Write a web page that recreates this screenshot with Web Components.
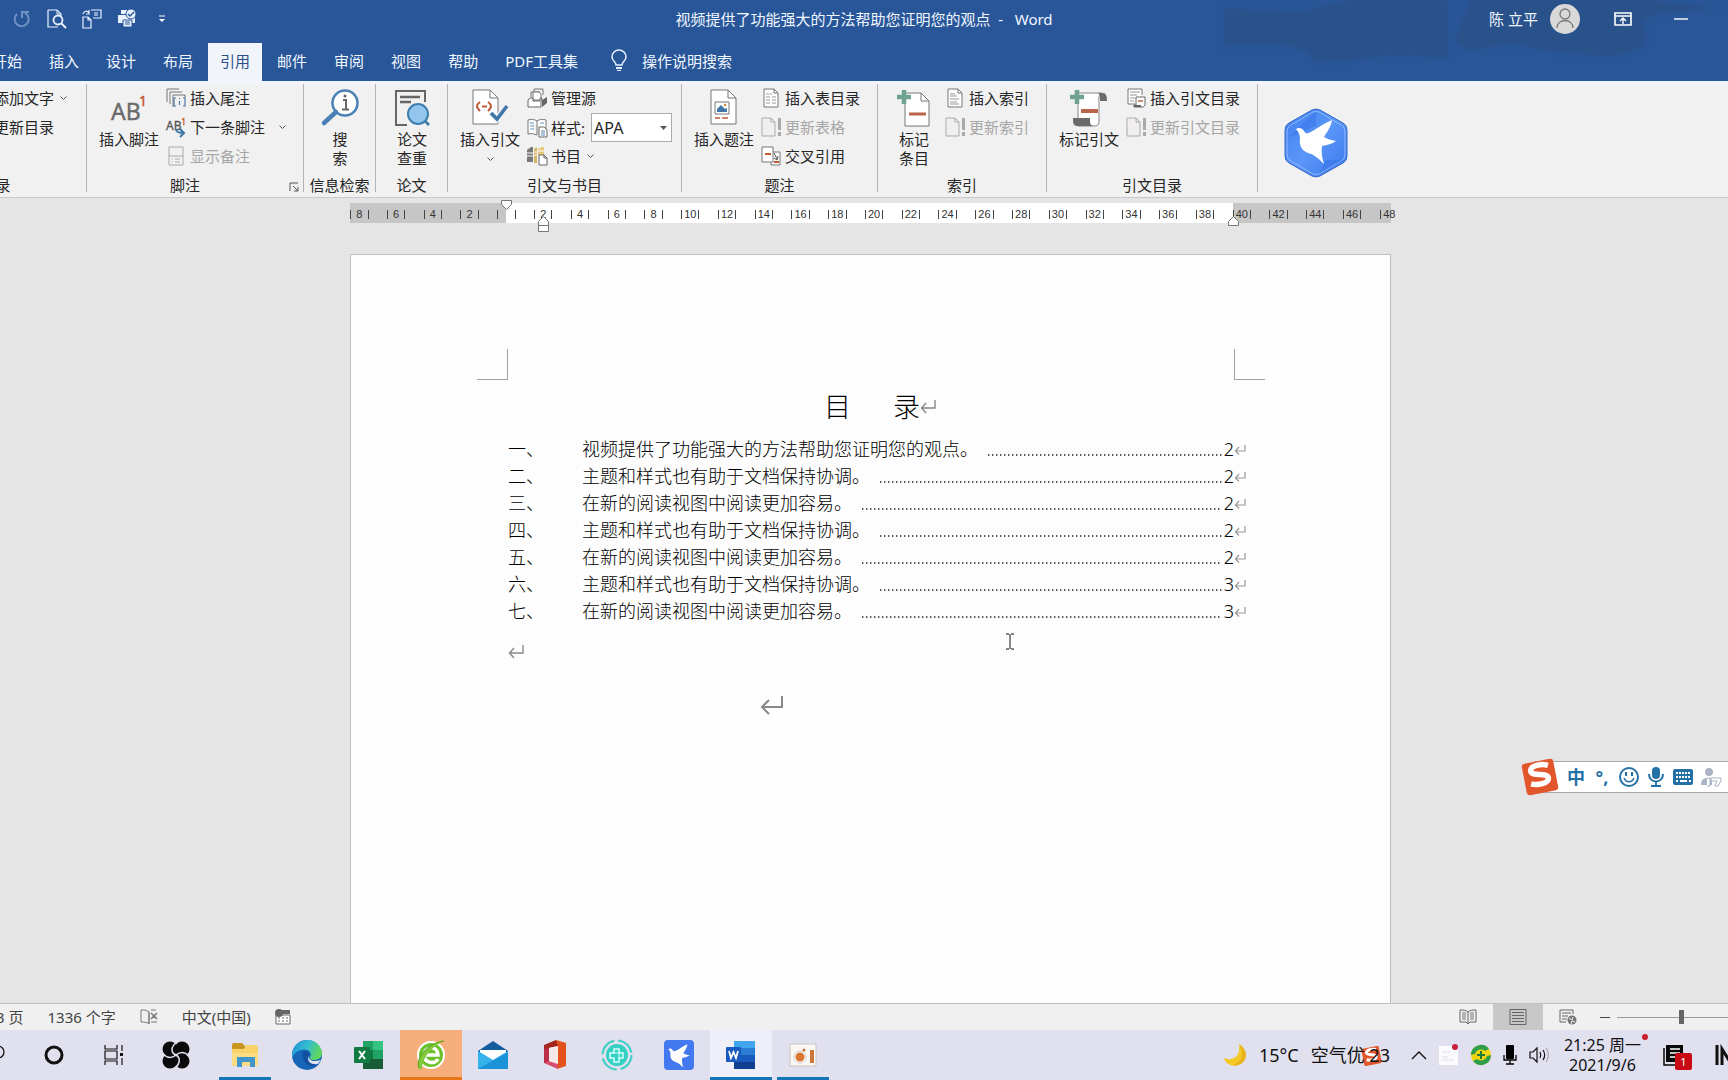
<!DOCTYPE html>
<html lang="zh-CN">
<head>
<meta charset="UTF-8">
<meta name="viewport" content="width=device-width, initial-scale=1">
<title>视频提供了功能强大的方法帮助您证明您的观点 - Word</title>
<style>
  html, body { height: 100%; }
  body {
    margin: 0;
    overflow: hidden;
    font: 15px/20px "Noto Sans", "Noto Sans CJK SC", sans-serif;
    color: #262626;
    background: #e5e5e5;
  }
</style>
</head>
<body>
<word-app></word-app>

<script>
const page = (w, h, f, extra = '') => `<path d="M1 1h${w - f - 2}l${f} ${f}v${h - f - 2}H1z" fill="#fff" stroke="#777"/><path d="M${w - f - 1} 1v${f}h${f}" fill="none" stroke="#777"/>${extra}`;
const bird = '<path d="M14 15c3-2 6-1 8 2 1 2 3 3 4 2 5-1 9-6 24-13-1 7-5 12-8 17 3 2 7 3 12 4-4 3-9 4-14 5-1 6 0 12 2 18-5-5-9-9-16-11-7-3-9-8-8-15 0-3-1-5-4-9z" fill="#fff"/>';
const staleDoc = '<path d="M1 1h9l4 4v14H1z" fill="#f0eeee" stroke="#aaa"/><path d="M10 1v4h4" fill="none" stroke="#aaa"/><path d="M17 1h3v12h-3zM17 15h3v4h-3z" fill="#aaa"/>';

const ICONS = {
  redo: [20, 20, '<path d="M5 5a7 7 0 1 0 8-1" fill="none" stroke="#6f90c2" stroke-width="2"/><path d="M10 9V3h7" fill="none" stroke="#6f90c2" stroke-width="2"/>'],
  preview: [20, 20, '<path d="M1 1h9l4 4v3M1 1v17h10" fill="none" stroke="#e8f2ff" stroke-width="1.2"/><path d="M10 1v4h4" fill="none" stroke="#e8f2ff"/><circle cx="11" cy="11" r="4.5" fill="none" stroke="#e8f2ff" stroke-width="1.8"/><path d="M14 14l5 5" stroke="#e8f2ff" stroke-width="2"/>'],
  convert: [20, 20, '<path d="M1 8h5l3 3v8H1zM6 8v3h3M9 1h10v8h-8M12 4h4M12 6h4" fill="none" stroke="#e8f2ff" stroke-width="1.2"/><path d="M1 5c1-3 4-4 6-1m0-3v4H4" fill="none" stroke="#e8f2ff" stroke-width="1.2"/>'],
  printer: [20, 20, '<path d="M4 1h6v4H4zM1 6h17v8H1z" fill="#e8f2ff"/><path d="M6 11h9v7H6z" fill="#e8f2ff" stroke="#295698"/><path d="M8 13h5M8 15h5" stroke="#295698"/><circle cx="14" cy="5" r="5" fill="#e8f2ff" stroke="#295698"/><path d="M11 5l2 2 4-4" fill="none" stroke="#295698" stroke-width="1.5"/>'],
  qatmore: [8, 8, '<path d="M1 1h6" stroke="#fff"/><path d="M1 4h6L4 7z" fill="#fff"/>'],
  user: [30, 30, '<circle cx="15" cy="15" r="15" fill="#d9d9d9"/><circle cx="15" cy="10" r="5" fill="none" stroke="#777" stroke-width="1.3"/><path d="M7 24c0-10 16-10 16 0" fill="none" stroke="#777" stroke-width="1.3"/>'],
  ribbonopt: [18, 14, '<path d="M1 1h16v12H1zM1 4h16" fill="none" stroke="#fff" stroke-width="1.6"/><path d="M9 12V6M6 9l3-3 3 3" fill="none" stroke="#fff" stroke-width="1.4"/>'],
  minimize: [14, 2, '<path d="M0 1h14" stroke="#fff" stroke-width="1.4"/>'],
  bulb: [16, 22, '<path d="M5 15c0-3-4-4-4-8a7 7 0 0 1 14 0c0 4-4 5-4 8z" fill="none" stroke="#e8f2ff" stroke-width="1.5"/><path d="M5 17h6v2H5zM6 20h4v1H6z" fill="#e8f2ff"/>'],
  chevron: [7, 4, '<path d="M.5 .5l3 3 3-3" fill="none" stroke="#555"/>'],
  launcher: [10, 10, '<path d="M1 9V1h8M4 4l5 5M9 5v4H5" fill="none" stroke="#555"/>'],

  footnote: [36, 37, '<text x="0" y="31" font-family="Noto Sans" font-size="23" fill="#6b6b6b" stroke="#6b6b6b" stroke-width=".4">AB</text><text x="28" y="17" font-family="Noto Sans" font-size="14" fill="#c9512f" stroke="#c9512f" stroke-width=".4">1</text>'],
  endnote: [20, 20, '<path d="M1 14V1h12M4 16V4h12M7 19V7h12v3" fill="none" stroke="#777"/><path d="M8 10h12v9H8z" fill="#f1f1f1"/><path d="M10 10H8v8h2M17 10h2v8h-2M13.500 13v4" fill="none" stroke="#4a78a8" stroke-width="1.2"/><path d="M13 10h1v1h-1z" fill="#4a78a8"/>'],
  nextnote: [20, 20, '<text x="0" y="13" font-family="Noto Sans" font-size="12" fill="#555" stroke="#555" stroke-width=".3">AB</text><text x="15" y="8" font-family="Noto Sans" font-size="9" fill="#c9512f" stroke="#c9512f" stroke-width=".3">1</text><path d="M10 12c0 3 2 4 8 4M14 12l4 4-4 4" fill="none" stroke="#3f76a8" stroke-width="2"/>'],
  shownotes: [20, 20, '<path d="M3 1h14v18H3zM3 10h14" fill="none" stroke="#aaa"/><path d="M6 13h1M9 13h5M6 16h1M9 16h5" stroke="#aaa"/>'],
  search: [38, 37, '<circle cx="24" cy="14" r="12.500" fill="#fff" stroke="#4a80b5" stroke-width="2.500"/><path d="M15 23L3 34" stroke="#4a80b5" stroke-width="4.500" stroke-linecap="round"/><path d="M22 11h3v9M21 20.500h7" fill="none" stroke="#666" stroke-width="2"/><circle cx="24" cy="7" r="1.500" fill="#666"/>'],
  paper: [36, 37, '<path d="M13 36H2V2h29v11" fill="none" stroke="#666" stroke-width="2"/><path d="M6 8h20M6 13h11" stroke="#666" stroke-width="2.500"/><circle cx="24" cy="25" r="10" fill="#93c6ee" stroke="#3f7fae" stroke-width="2"/><path d="M31 32l4 4" stroke="#3f7fae" stroke-width="3"/>'],
  citation: [36, 37, page(27, 36, 8, '<path d="M8 13c-4 3-4 5 0 9M16 13c4 3 4 5 0 9M10 17.500h5" fill="none" stroke="#c0593a" stroke-width="2"/><path d="M19 24l6 6L35 17" fill="none" stroke="#f1f1f1" stroke-width="6"/><path d="M19 24l6 6L35 17" fill="none" stroke="#3f76a8" stroke-width="3.500"/>')],
  sources: [20, 20, '<path d="M4 9V4h9M7 5V1h9v6" fill="none" stroke="#777"/><path d="M6 4h6l2 2v6H6z" fill="#fff" stroke="#777"/><path d="M1 19v-7l2-2h3v3h7v-3h2l-1 3v6z" fill="#fff" stroke="#666"/><path d="M15 12l5-3v6l-5 4z" fill="#666"/>'],
  style: [20, 20, '<path d="M1 2c3-1 6-1 9 1 3-2 6-2 9-1v9M10 3v14M1 2v14c3-1 6 0 9 1" fill="#fff" stroke="#777"/><path d="M3 5h4M3 8h4M3 11h4M13 5h4" stroke="#6a9bc8"/><path d="M12 9h5l3 3v7h-8z" fill="#fff" stroke="#666"/><path d="M14 13h4M14 15h4M14 17h4" stroke="#5a88b0"/>'],
  biblio: [20, 20, '<path d="M0 4l4-3h2v15H0z" fill="#777"/><path d="M7 3l3-2v16H7z" fill="#d6b562"/><path d="M11 3l4-2h2v8h-6z" fill="#e4c97d"/><path d="M0 7h6M0 10h6M7 6h3M7 9h3M11 5h6" stroke="#fff"/><path d="M12 9h5l3 3v7h-8z" fill="#fff" stroke="#666"/><path d="M17 9v3h3" fill="none" stroke="#666"/>'],
  caption: [28, 37, page(27, 36, 8, '<path d="M5 13h14v12H5z" fill="#fff" stroke="#777"/><path d="M7 23v-3l4-4 4 4 2-1v4z" fill="#3f76a8"/><circle cx="15" cy="16" r="1.300" fill="#c98f3a"/><path d="M5 29h5M12 29h6" stroke="#c0593a" stroke-width="1.500"/>')],
  list: [20, 20, '<path d="M3 1h10l4 4v14H3z" fill="#fff" stroke="#777"/><path d="M13 1v4h4" fill="none" stroke="#777"/><path d="M5 6h3M9 6h2M5 9h4M11 9h4M5 12h4M11 12h4M5 15h4M11 15h4" stroke="#999"/>'],
  stale: [20, 20, staleDoc],
  crossref: [20, 20, '<path d="M1 1h11v15H1zM12 6h7v13h-9v-3" fill="#fff" stroke="#777"/><path d="M4 8h6" stroke="#c0593a" stroke-width="2"/><path d="M13 16h5" stroke="#c0593a" stroke-width="2"/><path d="M13 7l3 6m-3-1l3 2 1-4" fill="none" stroke="#555"/>'],
  markentry: [34, 38, '<path d="M8 4h16l8 8v25H8z" fill="#fff" stroke="#777"/><path d="M24 4v8h8" fill="none" stroke="#777"/><path d="M12 25h17" stroke="#b9644a" stroke-width="3"/><path d="M7 1v14M0 8h14" stroke="#6fa38f" stroke-width="4.500"/>'],
  index: [20, 20, '<path d="M3 1h10l4 4v14H3z" fill="#fff" stroke="#777"/><path d="M13 1v4h4" fill="none" stroke="#777"/><path d="M5 6h5M5 8h7M5 11h9M5 14h7M5 16h9" stroke="#999"/>'],
  markcite: [38, 38, '<path d="M8 4h24c-3 2-4 5-3 9v20c0 3-2 4-5 4H8z" fill="#fff" stroke="#888"/><path d="M28 4h5c3 0 4 3 4 8h-7c0-5 0-6-2-8zM3 29h17c0 5 0 7 3 8H7c-4 0-4-4-4-8z" fill="#6b6b6b"/><path d="M11 22h17" stroke="#b9644a" stroke-width="4"/><path d="M7 1v14M0 8h14" stroke="#6fa38f" stroke-width="4.500"/>'],
  citetable: [20, 20, '<path d="M9 16H2V1h14v6" fill="#fff" stroke="#777"/><path d="M4 4h10M4 7h7M4 10h5M4 13h4" stroke="#999"/><path d="M10 9h9v7c0 2-1 3-3 3H8v-2h2z" fill="#fff" stroke="#666"/><path d="M12 13h5" stroke="#b9644a" stroke-width="1.500"/><path d="M8 17h7v2H8z" fill="#666"/>'],
  birdhex: [64, 70, '<defs><linearGradient id="h" x1="0" y1="0" x2="1" y2="1"><stop offset="0" stop-color="#3f7ff0"/><stop offset=".5" stop-color="#5a96f8"/><stop offset="1" stop-color="#3b78ec"/></linearGradient></defs><path d="M28 2q4-2 8 0l23 13q4 2 4 7v26q0 5-4 7L36 68q-4 2-8 0L5 55q-4-2-4-7V22q0-5 4-7z" fill="url(#h)" stroke="#3468c8"/><path d="M29 4q3-1 6 0l22 13q4 2 4 6v24q0 4-4 6L35 66q-3 1-6 0L7 53q-4-2-4-6V23q0-4 4-6z" fill="none" stroke="#8fb9ff"/><path d="M32 3v15L4 30zM42 52l17 0-24 14z" fill="#2f6be2" opacity=".35"/><g transform="translate(-2 6)">' + bird + '</g>'],

  retS: [12, 10, '<path d="M11 0v6H2M5 2L1.500 6 5 9.500" fill="none" stroke="#999" stroke-width="1.200"/>'],
  retM: [16, 14, '<path d="M15 0v8H2M6 3L1.500 8 6 13" fill="none" stroke="#888" stroke-width="1.400"/>'],
  retL: [24, 20, '<path d="M22 1v11H3M9 5l-7 7 7 7" fill="none" stroke="#888" stroke-width="2"/>'],
  ibeam: [8, 18, '<path d="M0 1h3M5 1h3M0 16h3M5 16h3M4 1v15" fill="none" stroke="#111"/>'],

  sogou: [38, 38, '<g transform="rotate(-11 19 19)"><rect x="3" y="3" width="32" height="32" rx="3" fill="#e2562c"/><path d="M29 9c-6-3-17-3-18 2-1 7 17 4 16 11-1 5-12 5-18 2" fill="none" stroke="#fff" stroke-width="5.500"/></g>'],
  smile: [20, 20, '<circle cx="10" cy="10" r="9" fill="none" stroke="#2471a8" stroke-width="2"/><path d="M7 5v4M13 5v4" stroke="#2471a8" stroke-width="2"/><path d="M5 11c2 5 8 5 10 0" fill="none" stroke="#2471a8" stroke-width="1.600"/>'],
  imemic: [18, 20, '<rect x="5" y="0" width="8" height="12" rx="4" fill="#2471a8"/><path d="M2 7c0 10 14 10 14 0M9 14v5M4 19h10" fill="none" stroke="#2471a8" stroke-width="2"/>'],
  keyboard: [20, 16, '<rect width="20" height="16" rx="2" fill="#2471a8"/><path d="M3 4h14M3 8h14" stroke="#fff" stroke-width="2" stroke-dasharray="2 1"/><path d="M3 12h2M7 12h7M16 12h2" stroke="#fff" stroke-width="2"/>'],
  person: [20, 20, '<circle cx="8" cy="5" r="4" fill="#aab4c4"/><path d="M0 18c0-6 3-7 7-7h4v7z" fill="#aab4c4"/><path d="M6 11h3v8H6M10 11h10v3l-3 5h-3l2-5h-6z" fill="#fff" stroke="#aab4c4"/>'],
  spell: [18, 16, '<path d="M9 3C7 1 4 1 1 1v12c3 0 6 0 8 2zM9 3v12M11 1h5" fill="none" stroke="#777"/><path d="M11 4l6 6m0-6l-6 6" stroke="#777" stroke-width="1.500"/><path d="M11 13h6" stroke="#777"/>'],
  macro: [16, 16, '<path d="M1 6h14v9H1z" fill="#fff" stroke="#666"/><path d="M7 1h8v4H7z" fill="#666"/><circle cx="4" cy="4" r="4" fill="#666"/><path d="M3 9h11M3 12h11" stroke="#666" stroke-dasharray="2 2"/>'],
  read: [18, 16, '<path d="M9 3C7 1 4 1 1 1v12h6l2 2 2-2h6V1c-3 0-6 0-8 2zM9 3v12" fill="none" stroke="#666"/><path d="M3 4h4M3 6h4M3 8h4M3 10h4M11 4h4M11 6h4M11 8h4M11 10h4" stroke="#777"/>'],
  print: [18, 16, '<path d="M1 .5h16v15H1z" fill="none" stroke="#666"/><path d="M3 3.500h12M3 6.500h12M3 9.500h12M3 12.500h12" stroke="#666"/>'],
  web: [18, 16, '<path d="M7 13H1V1h13v4M3 4h9M3 7h6M3 10h5" fill="none" stroke="#666"/><circle cx="13" cy="11" r="4.500" fill="#777"/><path d="M10 9l3 2 1-3M12 15l1-3 3 1" fill="none" stroke="#f0f0f0"/>'],

  find: [24, 24, '<circle cx="20" cy="9" r="6" fill="none" stroke="#111" stroke-width="1.300"/><path d="M15 13l-7 8" stroke="#111" stroke-width="1.300"/>'],
  cortana: [24, 24, '<circle cx="14" cy="12" r="8" fill="none" stroke="#111" stroke-width="3"/>'],
  taskview: [24, 24, '<path d="M3 2v4h12V2M3 22v-4h12v4M3 8h12v8H3zM20 2v6M20 15v7" fill="none" stroke="#111" stroke-width="1.200"/><path d="M18 10h3v3h-3z" fill="#111"/>'],
  flower: [28, 28, '<g fill="#0a0a0a"><circle cx="8" cy="8" r="7.500"/><circle cx="20" cy="8" r="7.500"/><circle cx="8" cy="20" r="7.500"/><circle cx="20" cy="20" r="7.500"/></g><path d="M14 14C9 12 8 6 15 1M14 14c5-4 9-3 13 1M14 14c5 3 4 9-1 13M14 14c-5 4-9 3-13-1" fill="none" stroke="#e0e0ee" stroke-width="1.500"/>'],
  folder: [28, 28, '<path d="M1 4q0-2 2-2h8l3 3v6H1z" fill="#c8951f"/><path d="M1 8h12l2-4h10q2 0 2 2v19H1z" fill="#f7d36a"/><path d="M1 12h26v13H1z" fill="#fbdc82"/><path d="M6 26V16h18v10h-5v-5h-8v5z" fill="#4396cc"/>'],
  edge: [32, 32, '<defs><linearGradient id="e" x1="0" y1="0" x2="1" y2=".3"><stop offset="0" stop-color="#1f8fd8"/><stop offset=".55" stop-color="#33bdd0"/><stop offset="1" stop-color="#5fd65e"/></linearGradient></defs><circle cx="16" cy="16" r="15" fill="#1765b8"/><path d="M1 15C3-3 29-4 31 14c0 5-4 7-8 7-3 0-5-1-4-3 3-5-3-9-9-7-4 1-8 4-9 8z" fill="url(#e)"/><path d="M12 13c-2 7 3 14 10 14 3 0 5-1 6-2-3 1-9 0-11-4-1-2 0-4 2-5-1-4-5-5-7-3z" fill="#1450a0"/><path d="M18 17c-1 5 5 6 12 4l-3 4c-6 1-12-2-9-8z" fill="#e0e0ee"/>'],
  excel: [30, 28, '<path d="M9 0h11v14H9z" fill="#21a366"/><path d="M19 0h10v9H19z" fill="#33c481"/><path d="M9 9h10v10H9z" fill="#107c41"/><path d="M19 9h10v10H19z" fill="#21a366"/><path d="M9 18h20v10H9z" fill="#185c37"/><rect y="6" width="16" height="16" rx="1" fill="#107c41"/><path d="M5 10l6 8M11 10l-6 8" stroke="#fff" stroke-width="2"/>'],
  browser: [32, 32, '<circle cx="16" cy="16" r="13" fill="#6cc22c" stroke="#fff" stroke-width="2"/><path d="M23 20c-3 6-14 4-14-4 0-9 14-10 14 0H10" fill="none" stroke="#fff" stroke-width="3.500"/><path d="M4 30C0 22 10 4 29 2c-9 4-20 13-22 26 0 2-2 3-3 2z" fill="#7fc93a"/><path d="M4 29C0 20 12 4 29 2" fill="none" stroke="#56a11e"/>'],
  mail: [30, 28, '<path d="M0 10L15 0l15 10v5H0z" fill="#145c9e"/><path d="M2 9h26v12H2z" fill="#fff"/><path d="M0 10l15 9 15-9v18H0z" fill="#35b2ec"/><path d="M0 28l30-17v17z" fill="#1c93d8"/>'],
  office: [24, 30, '<path d="M13 0l10 3v23l-9 3z" fill="#e2521a"/><path d="M13 0L1 5v18l5-2V8l9-2z" fill="#a5251e"/><path d="M1 23l5-2 9 3v5z" fill="#d64b6e"/><path d="M6 8l9-2v18l-9-3z" fill="#f7e9ea"/><path d="M1 9v14l5-2V8z" fill="#bb3048"/>'],
  teal: [32, 32, '<circle cx="16" cy="16" r="14.500" fill="none" stroke="#3fcfc5" stroke-width="2" stroke-dasharray="19 4"/><circle cx="16" cy="16" r="11" fill="#35cfc4"/><path d="M13 10h5v4h4v5h-4v4h-5v-4h-4v-5h4z" fill="none" stroke="#d7fffa" stroke-width="1.500"/><path d="M13 14h5v5" fill="none" stroke="#d7fffa"/>'],
  birdapp: [30, 30, '<rect width="30" height="30" rx="4" fill="#4279ee"/><g transform="translate(-3 1) scale(.53)">' + bird + '</g>'],
  word: [30, 28, '<path d="M8 0h21v7H8z" fill="#41a5ee"/><path d="M8 7h21v7H8z" fill="#2b7cd3"/><path d="M8 14h21v7H8z" fill="#185abd"/><path d="M8 21h21v7H8z" fill="#103f91"/><rect y="6" width="15" height="15" rx="1" fill="#185abd"/><path d="M3 10l2 7 2.500-6L10 17l2-7" fill="none" stroke="#fff" stroke-width="1.800"/>'],
  recorder: [28, 24, '<path d="M1 1h26v22H1z" fill="#faf7f4" stroke="#c9c4c4"/><circle cx="11" cy="14" r="6" fill="#fff" stroke="#ccc"/><circle cx="11" cy="14" r="4.500" fill="#d9772f"/><circle cx="15" cy="7" r="1.500" fill="#c9772f"/><path d="M21 7h4v13h-4z" fill="#c9773a"/>'],

  moon: [24, 24, '<path d="M16 1c8 5 9 14 3 19-6 5-16 3-18-5 10 4 17-3 15-14z" fill="#f4c827"/><path d="M16 1c8 5 9 14 3 19-3 2-6 3-9 2 8-2 12-11 6-21z" fill="#e9b31b"/>'],
  up: [16, 10, '<path d="M1 9l7-7 7 7" fill="none" stroke="#111" stroke-width="1.400"/>'],
  traydoc: [20, 22, '<path d="M0 2h19v19H0z" fill="#fbfbfd"/><path d="M3 8h9M3 13h6M3 16h12" stroke="#dcdce4"/><circle cx="16" cy="3" r="3" fill="#c81e3a"/>'],
  guard: [20, 20, '<circle cx="10" cy="10" r="10" fill="#f2d40f"/><path d="M0 10A10 10 0 0 1 18 4L14 6C10 3 5 5 4 9zM20 10a10 10 0 0 1-18 6l4-2c4 3 9 1 10-3z" fill="#2f9e4a"/><path d="M10 6v8M6 10h8" stroke="#1f7c38" stroke-width="2"/>'],
  mic: [14, 20, '<rect x="3" y="0" width="8" height="14" rx="1" fill="#000"/><path d="M1 10v5h12v-5M7 15v4M3 19h8" fill="none" stroke="#000" stroke-width="1.300"/>'],
  speaker: [22, 16, '<path d="M1 5h3l4-4v14l-4-4H1z" fill="none" stroke="#111" stroke-width="1.200"/><path d="M11 5c1 2 1 4 0 6M14 3c2 3 2 7 0 10" fill="none" stroke="#111" stroke-width="1.200"/><path d="M17 1c3 4 3 10 0 14" fill="none" stroke="#999"/>'],
  notice: [22, 22, '<path d="M3 1h17v17H3z" fill="#0a0a0a"/><path d="M1 4v17h15" fill="none" stroke="#0a0a0a" stroke-width="1.500"/><path d="M7 5h10M7 9h10M7 13h6" stroke="#fff" stroke-width="1.500"/>'],
  pen: [24, 24, '<path d="M2 2v20M7 22V6l10 16" fill="none" stroke="#111" stroke-width="3"/>'],
};

class UiIcon extends HTMLElement {
  connectedCallback() {
    const [w, h, body] = ICONS[this.getAttribute('name')];
    this.attachShadow({ mode: 'open' }).innerHTML = `
      <style>
        :host { display: inline-flex; flex: none; }
        svg { display: block; overflow: visible; }
      </style>
      <svg width="${w}" height="${h}" viewBox="0 0 ${w} ${h}" aria-hidden="true">${body}</svg>
    `;
  }
}

class TitleBar extends HTMLElement {
  connectedCallback() {
    this.attachShadow({ mode: 'open' }).innerHTML = `
      <style>
        :host { display: block; position: relative; background: #295698; color: #f0f7ff; }
        .clouds { position: absolute; top: 0; right: 0; }
        .bar {
          position: relative;
          display: grid;
          grid-template-columns: 1fr auto 1fr;
          align-items: center;
          height: 38px;
        }
        .quick { display: flex; align-items: center; gap: 15px; padding-left: 12px; }
        .quick button:last-child { margin-left: 6px; }
        h1 { margin: 0; font-size: 15px; font-weight: 400; white-space: pre; }
        .right { display: flex; align-items: center; justify-content: flex-end; padding-right: 40px; }
        .user { display: flex; align-items: center; gap: 12px; margin-right: 34px; }
        .opt { margin-right: 42px; }
        button { display: flex; padding: 0; border: 0; background: none; color: inherit; font: inherit; align-items: center; }
      </style>
      <svg class="clouds" width="520" height="72" viewBox="0 0 520 72" aria-hidden="true">
        <filter id="soft"><feGaussianBlur stdDeviation="2"/></filter>
        <g fill="#2b4f84" opacity=".65" filter="url(#soft)">
          <path d="M16 8L90 12l50-12h100v58q-60-6-96 2l-36 2-12-12q-30-10-80-4z"/>
          <path d="M262 0h180l70 8-60 6-20 6 8 16q-8 20-44 20-60-4-90-12l-44 6q-14-4-14-14z"/>
        </g>
      </svg>
      <div class="bar">
        <div class="quick">
          <button aria-label="重复"><ui-icon name="redo"></ui-icon></button>
          <button aria-label="打印预览"><ui-icon name="preview"></ui-icon></button>
          <button aria-label="转换"><ui-icon name="convert"></ui-icon></button>
          <button aria-label="快速打印"><ui-icon name="printer"></ui-icon></button>
          <button aria-label="自定义"><ui-icon name="qatmore"></ui-icon></button>
        </div>
        <h1>视频提供了功能强大的方法帮助您证明您的观点  -   Word</h1>
        <div class="right">
          <button class="user">陈 立平<ui-icon name="user"></ui-icon></button>
          <button class="opt" aria-label="功能区显示选项"><ui-icon name="ribbonopt"></ui-icon></button>
          <button aria-label="最小化"><ui-icon name="minimize"></ui-icon></button>
        </div>
      </div>
      <slot></slot>
    `;
  }
}

class RibbonTabs extends HTMLElement {
  connectedCallback() {
    const tabs = ['开始', '插入', '设计', '布局', '引用', '邮件', '审阅', '视图', '帮助', 'PDF工具集'];
    this.attachShadow({ mode: 'open' }).innerHTML = `
      <style>
        :host { display: block; position: relative; padding-top: 5px; overflow: hidden; }
        nav { display: flex; gap: 3px; margin-left: -20px; }
        button {
          height: 38px;
          padding: 0 12px 2px;
          border: 0;
          background: none;
          color: #f0f7ff;
          font: inherit;
          white-space: nowrap;
        }
        button[aria-selected="true"] { background: #f1f4fa; color: #2b4f84; }
        .tell { display: flex; align-items: center; gap: 15px; margin-left: 6px; }
      </style>
      <nav role="tablist">
        ${tabs.map(t => `<button role="tab" aria-selected="${t === '引用'}">${t}</button>`).join('')}
        <button class="tell"><ui-icon name="bulb"></ui-icon>操作说明搜索</button>
      </nav>
    `;
  }
}

class RibbonGroup extends HTMLElement {
  connectedCallback() {
    const launcher = this.hasAttribute('launcher')
      ? '<button aria-label="脚注和尾注"><ui-icon name="launcher"></ui-icon></button>' : '';
    this.attachShadow({ mode: 'open' }).innerHTML = `
      <style>
        :host {
          display: flex;
          flex: none;
          flex-direction: column;
          gap: 8px;
          box-sizing: border-box;
          border-right: 1px solid #b4b4b4;
        }
        .items { display: flex; gap: 3px; height: 87px; padding: 0 7px 0 8px; }
        .foot { display: flex; line-height: 13px; }
        .label { flex: 1; text-align: center; white-space: nowrap; }
        button {
          display: flex;
          align-items: flex-end;
          justify-content: flex-end;
          width: 16px;
          padding: 0;
          margin-right: 4px;
          border: 0;
          background: none;
        }
      </style>
      <div class="items"><slot></slot></div>
      <div class="foot"><span class="label">${this.getAttribute('label')}</span>${launcher}</div>
    `;
  }
}

class RibbonBig extends HTMLElement {
  connectedCallback() {
    this.attachShadow({ mode: 'open' }).innerHTML = `
      <style>
        :host { display: block; }
        button {
          display: flex;
          flex-direction: column;
          align-items: center;
          min-width: 56px;
          padding: 5px 4px 0;
          border: 0;
          background: none;
          color: inherit;
          font: inherit;
          line-height: 19px;
          text-align: center;
          white-space: pre-line;
        }
        .pic { display: flex; justify-content: center; height: 41px; }
        .more { padding-top: 8px; line-height: 4px; }
      </style>
      <button>
        <span class="pic"><ui-icon name="${this.getAttribute('icon')}"></ui-icon></span>
        <slot></slot>
        ${this.hasAttribute('menu') ? '<ui-icon class="more" name="chevron"></ui-icon>' : ''}
      </button>
    `;
  }
}

class RibbonItem extends HTMLElement {
  connectedCallback() {
    const icon = this.getAttribute('icon');
    const menu = this.getAttribute('menu');
    this.attachShadow({ mode: 'open' }).innerHTML = `
      <style>
        :host { display: block; }
        button {
          display: flex;
          align-items: center;
          height: 29px;
          padding: 0 10px 2px 0;
          border: 0;
          background: none;
          color: inherit;
          font: inherit;
          white-space: nowrap;
        }
        button:disabled { color: #a6a6a6; }
        .icon { margin-right: 4px; }
        .more { margin-left: 6px; }
        .split { margin-left: 14px; }
      </style>
      <button ${this.hasAttribute('disabled') ? 'disabled' : ''}>
        ${icon ? `<ui-icon class="icon" name="${icon}"></ui-icon>` : ''}
        <slot></slot>
        ${menu !== null ? `<ui-icon class="${menu || 'more'}" name="chevron"></ui-icon>` : ''}
      </button>
    `;
  }
}

class CitationStyle extends HTMLElement {
  connectedCallback() {
    this.attachShadow({ mode: 'open' }).innerHTML = `
      <style>
        :host { display: flex; align-items: center; height: 29px; padding-right: 2px; }
        label { width: 36px; margin: 0 4px; white-space: nowrap; }
        .box { display: grid; align-items: center; }
        .box > * { grid-area: 1 / 1; }
        select {
          appearance: none;
          box-sizing: border-box;
          width: 81px;
          height: 29px;
          padding: 0 2px;
          border: 1px solid #ababab;
          border-radius: 0;
          background: #fff;
          color: #262626;
          font: inherit;
          font-size: 16px;
        }
        svg { justify-self: end; margin-right: 5px; pointer-events: none; }
      </style>
      <ui-icon name="style"></ui-icon>
      <label for="style">样式:</label>
      <span class="box">
        <select id="style"><option>APA</option><option>Chicago</option><option>MLA</option></select>
        <svg width="7" height="4" viewBox="0 0 7 4"><path d="M0 0h7L3.500 4z" fill="#555"/></svg>
      </span>
    `;
  }
}

class WordRibbon extends HTMLElement {
  connectedCallback() {
    this.attachShadow({ mode: 'open' }).innerHTML = `
      <style>
        :host {
          display: flex;
          flex: none;
          overflow: hidden;
          padding: 3px 0 5px;
          border-bottom: 1px solid #cacaca;
          background: linear-gradient(#f1f6fd, #f1f1f1 6px);
        }
        .toc { width: 182px; margin-left: -95px; }
        .toc .col { margin-left: auto; padding-right: 2px; }
        .brand { display: flex; align-items: center; padding: 10px 26px 0; }
      </style>
      <ribbon-group class="toc" label="目录">
        <div class="col">
          <ribbon-item menu>添加文字</ribbon-item>
          <ribbon-item>更新目录</ribbon-item>
        </div>
      </ribbon-group>
      <ribbon-group label="脚注" launcher>
        <ribbon-big icon="footnote">插入脚注</ribbon-big>
        <div>
          <ribbon-item icon="endnote">插入尾注</ribbon-item>
          <ribbon-item icon="nextnote" menu="split">下一条脚注</ribbon-item>
          <ribbon-item icon="shownotes" disabled>显示备注</ribbon-item>
        </div>
      </ribbon-group>
      <ribbon-group label="信息检索">
        <ribbon-big icon="search">搜<br>索</ribbon-big>
      </ribbon-group>
      <ribbon-group label="论文">
        <ribbon-big icon="paper">论文<br>查重</ribbon-big>
      </ribbon-group>
      <ribbon-group label="引文与书目">
        <ribbon-big icon="citation" menu>插入引文</ribbon-big>
        <div>
          <ribbon-item icon="sources">管理源</ribbon-item>
          <citation-style></citation-style>
          <ribbon-item icon="biblio" menu>书目</ribbon-item>
        </div>
      </ribbon-group>
      <ribbon-group label="题注">
        <ribbon-big icon="caption">插入题注</ribbon-big>
        <div>
          <ribbon-item icon="list">插入表目录</ribbon-item>
          <ribbon-item icon="stale" disabled>更新表格</ribbon-item>
          <ribbon-item icon="crossref">交叉引用</ribbon-item>
        </div>
      </ribbon-group>
      <ribbon-group label="索引">
        <ribbon-big icon="markentry">标记<br>条目</ribbon-big>
        <div>
          <ribbon-item icon="index">插入索引</ribbon-item>
          <ribbon-item icon="stale" disabled>更新索引</ribbon-item>
        </div>
      </ribbon-group>
      <ribbon-group label="引文目录">
        <ribbon-big icon="markcite">标记引文</ribbon-big>
        <div>
          <ribbon-item icon="citetable">插入引文目录</ribbon-item>
          <ribbon-item icon="stale" disabled>更新引文目录</ribbon-item>
        </div>
      </ribbon-group>
      <div class="brand"><ui-icon name="birdhex"></ui-icon></div>
    `;
  }
}

class WordRuler extends HTMLElement {
  connectedCallback() {
    let cells = '';
    for (let n = -8; n <= 48; n += 2) {
      cells += `<span class="cell"><span class="tick">${n ? Math.abs(n) : ''}</span></span>`;
    }
    this.attachShadow({ mode: 'open' }).innerHTML = `
      <style>
        :host {
          display: block;
          position: relative;
          height: 20px;
          background: linear-gradient(90deg, #c6c6c6 156px, #fff 156px, #fff 883px, #c6c6c6 883px);
        }
        .scale {
          display: flex;
          align-items: center;
          height: 22px;
          margin: 0 -16px 0 -9px;
          font: 11px/9px "Liberation Sans", Arial, sans-serif;
          color: #333;
        }
        .cell { display: flex; flex: 1; justify-content: center; }
        .tick { width: 50%; height: 9px; border: solid #444; border-width: 0 1px; text-align: center; box-sizing: border-box; }
        .cell:last-child .tick { border-right: 0; }
        svg { position: absolute; }
        .first { left: 151px; top: -3px; }
        .hang { left: 188px; top: 13px; }
        .right { left: 878px; top: 13px; }
      </style>
      <div class="scale">${cells}</div>
      <svg class="first" width="11" height="10"><path d="M.5 .5h10v4l-5 5-5-5z" fill="#fff" stroke="#777"/></svg>
      <svg class="hang" width="11" height="16"><path d="M.5 5.500l5-5 5 5v10H.5zM.5 9.500h10" fill="#fff" stroke="#777"/></svg>
      <svg class="right" width="11" height="10"><path d="M.5 5.500l5-5 5 5v4H.5z" fill="#fff" stroke="#777"/></svg>
    `;
  }
}

class TocRow extends HTMLElement {
  connectedCallback() {
    this.attachShadow({ mode: 'open' }).innerHTML = `
      <style>
        :host { display: flex; align-items: center; height: 27px; }
        .num { flex: none; width: 74px; }
        .leader {
          flex: 1;
          height: 2px;
          margin: 11px 2px 0 10px;
          background: repeating-linear-gradient(90deg, #555 0 1px, #bbb 1px 2px, transparent 2px 4px);
        }
        ui-icon { margin-right: -12px; }
      </style>
      <span class="num">${this.getAttribute('num')}、</span>
      <slot></slot>
      <span class="leader"></span>
      <span>${this.getAttribute('page')}</span>
      <ui-icon name="retS"></ui-icon>
    `;
  }
}

class DocPage extends HTMLElement {
  connectedCallback() {
    this.attachShadow({ mode: 'open' }).innerHTML = `
      <style>
        :host {
          display: block;
          position: relative;
          flex: 1;
          box-sizing: border-box;
          padding: 94px 125px 0 126px;
          border: 1px solid #c0c0c0;
          border-bottom: 0;
          background: #fdfdfd;
          color: #000;
        }
        .corners { display: flex; justify-content: space-between; }
        .corners span { width: 31px; height: 31px; border: solid #a0a0a0; border-width: 0 1px 1px 0; box-sizing: border-box; }
        .corners span + span { border-width: 0 0 1px 1px; }
        .body { padding: 8px 31px 0; font-size: 18px; font-weight: 300; line-height: 27px; }
        h2 {
          display: flex;
          align-items: center;
          justify-content: center;
          margin: 0 0 10px;
          font-size: 27px;
          font-weight: 300;
          line-height: 38px;
          white-space: pre;
        }
        h2 ui-icon { margin-right: -18px; }
        p { margin: 0; }
        .end { padding-top: 14px; height: 70px; box-sizing: border-box; }
        .next { padding-left: 252px; }
        .cursor { position: absolute; left: 655px; top: 378px; }
      </style>
      <div class="corners"><span></span><span></span></div>
      <div class="body">
        <h2>目      录<ui-icon name="retM"></ui-icon></h2>
        <slot></slot>
        <p class="end"><ui-icon name="retM"></ui-icon></p>
        <p class="next"><ui-icon name="retL"></ui-icon></p>
      </div>
      <ui-icon class="cursor" name="ibeam"></ui-icon>
    `;
  }
}

class ImeBar extends HTMLElement {
  connectedCallback() {
    this.attachShadow({ mode: 'open' }).innerHTML = `
      <style>
        :host {
          display: flex;
          align-items: center;
          gap: 8px;
          height: 30px;
          padding-right: 7px;
          border: solid #a9a9a9;
          border-width: 1px 0;
          background: #fff;
          color: #2471a8;
          font-size: 18px;
          font-weight: 700;
        }
        .logo { margin: 0 0 0 -13px; }
        button { padding: 0; border: 0; background: none; color: inherit; font: inherit; }
        .punct { width: 18px; }
      </style>
      <ui-icon class="logo" name="sogou"></ui-icon>
      <button>中</button>
      <button class="punct">°,</button>
      <ui-icon name="smile"></ui-icon>
      <ui-icon name="imemic"></ui-icon>
      <ui-icon name="keyboard"></ui-icon>
      <ui-icon name="person"></ui-icon>
    `;
  }
}

class StatusBar extends HTMLElement {
  connectedCallback() {
    this.attachShadow({ mode: 'open' }).innerHTML = `
      <style>
        :host {
          display: flex;
          flex: none;
          align-items: center;
          justify-content: space-between;
          height: 26px;
          overflow: hidden;
          border-top: 1px solid #c0c0c0;
          background: #f0f0f0;
          color: #444;
        }
        div { display: flex; align-items: center; height: 100%; }
        .info { gap: 24px; margin-left: -4px; }
        .views { margin-right: -17px; }
        button {
          display: flex;
          align-items: center;
          justify-content: center;
          width: 50px;
          height: 100%;
          padding: 0;
          border: 0;
          background: none;
          color: inherit;
          font: inherit;
        }
        button[aria-pressed="true"] { background: #c8c8c8; }
        .minus { width: 24px; }
        .minus span { width: 10px; height: 1px; background: #444; }
        input { appearance: none; width: 128px; height: 16px; margin: 0; background: linear-gradient(#999, #999) center / 100% 1px no-repeat; }
        input::-webkit-slider-thumb { appearance: none; width: 5px; height: 14px; background: #666; }
      </style>
      <div class="info">
        <span>3 页</span>
        <span>1336 个字</span>
        <ui-icon name="spell"></ui-icon>
        <span>中文(中国)</span>
        <ui-icon name="macro"></ui-icon>
      </div>
      <div class="views">
        <button aria-label="阅读视图"><ui-icon name="read"></ui-icon></button>
        <button aria-label="页面视图" aria-pressed="true"><ui-icon name="print"></ui-icon></button>
        <button aria-label="Web 版式视图"><ui-icon name="web"></ui-icon></button>
        <button class="minus" aria-label="缩小"><span></span></button>
        <input type="range" aria-label="显示比例" min="0" max="100" value="50">
      </div>
    `;
  }
}

class TaskApp extends HTMLElement {
  connectedCallback() {
    this.attachShadow({ mode: 'open' }).innerHTML = `
      <style>
        :host { display: flex; flex: none; width: 62px; }
        button {
          display: flex;
          flex: 1;
          align-items: center;
          justify-content: center;
          box-sizing: border-box;
          padding: 3px 0 0;
          border: 0;
          border-bottom: 3px solid transparent;
          background: none;
        }
        :host([running]) { padding: 0 5px; width: 52px; }
        :host([running]) button, :host([active]) button { border-color: #1674b8; }
        :host([active]) button { background: #eeeff8; }
        :host([alert]) button { background: #f6af7c; border-color: #e87516; }
      </style>
      <button aria-label="${this.getAttribute('label')}"><ui-icon name="${this.getAttribute('icon')}"></ui-icon></button>
    `;
  }
}

class TaskBar extends HTMLElement {
  connectedCallback() {
    this.attachShadow({ mode: 'open' }).innerHTML = `
      <style>
        :host {
          display: flex;
          flex: none;
          justify-content: space-between;
          height: 50px;
          overflow: hidden;
          background: #e0e0ee;
          color: #111;
        }
        .apps { display: flex; margin-left: -41px; }
        .pins { display: flex; margin-right: 7px; }
        .tray { display: flex; align-items: center; margin-right: -11px; white-space: nowrap; }
        .weather { display: flex; align-items: center; gap: 12px; margin-right: 21px; font-size: 18px; }
        .weather > span { white-space: pre; }
        .air { position: relative; z-index: 0; }
        .air ui-icon { position: absolute; right: 8px; top: -8px; z-index: -1; transform: scale(.55); transform-origin: right; }
        .icons { display: flex; align-items: center; gap: 12px; margin-right: 13px; }
        time { position: relative; font-size: 16px; line-height: 20px; text-align: center; margin-right: 22px; }
        time::after { content: ""; position: absolute; right: -7px; top: -1px; width: 6px; height: 6px; border-radius: 3px; background: #c8202c; }
        .notice { position: relative; display: flex; margin-right: 30px; }
        .badge {
          position: absolute;
          left: 12px;
          top: 9px;
          width: 17px;
          border-radius: 2px;
          background: #c80a14;
          color: #fff;
          font-size: 11px;
          line-height: 17px;
          text-align: center;
        }
      </style>
      <div class="apps">
        <div class="pins">
          <task-app icon="find" label="搜索"></task-app>
          <task-app icon="cortana" label="Cortana"></task-app>
          <task-app icon="taskview" label="任务视图"></task-app>
          <task-app icon="flower" label="小组件"></task-app>
        </div>
        <task-app icon="folder" label="文件资源管理器" running></task-app>
        <task-app icon="edge" label="Edge"></task-app>
        <task-app icon="excel" label="Excel"></task-app>
        <task-app icon="browser" label="浏览器" alert></task-app>
        <task-app icon="mail" label="邮件"></task-app>
        <task-app icon="office" label="Office"></task-app>
        <task-app icon="teal" label="助手"></task-app>
        <task-app icon="birdapp" label="论文查重"></task-app>
        <task-app icon="word" label="Word" active></task-app>
        <task-app icon="recorder" label="录屏" running></task-app>
      </div>
      <div class="tray">
        <div class="weather">
          <ui-icon name="moon"></ui-icon>
          <span>15°C</span>
          <span class="air">空气优 23<ui-icon name="sogou"></ui-icon></span>
        </div>
        <div class="icons">
          <ui-icon name="up"></ui-icon>
          <ui-icon name="traydoc"></ui-icon>
          <ui-icon name="guard"></ui-icon>
          <ui-icon name="mic"></ui-icon>
          <ui-icon name="speaker"></ui-icon>
        </div>
        <time datetime="2021-09-06T21:25">21:25 周一<br>2021/9/6</time>
        <span class="notice"><ui-icon name="notice"></ui-icon><span class="badge">1</span></span>
        <ui-icon name="pen"></ui-icon>
      </div>
    `;
  }
}

class WordApp extends HTMLElement {
  connectedCallback() {
    const lines = [
      ['一', '视频提供了功能强大的方法帮助您证明您的观点。', 2],
      ['二', '主题和样式也有助于文档保持协调。', 2],
      ['三', '在新的阅读视图中阅读更加容易。', 2],
      ['四', '主题和样式也有助于文档保持协调。', 2],
      ['五', '在新的阅读视图中阅读更加容易。', 2],
      ['六', '主题和样式也有助于文档保持协调。', 3],
      ['七', '在新的阅读视图中阅读更加容易。', 3],
    ];
    this.attachShadow({ mode: 'open' }).innerHTML = `
      <style>
        :host { display: flex; flex-direction: column; height: 100vh; position: relative; }
        .canvas {
          display: flex;
          flex: 1;
          justify-content: center;
          min-height: 0;
          overflow: hidden;
          padding: 5px 0 0 13px;
        }
        .sheet { display: flex; flex-direction: column; gap: 31px; width: 1041px; }
        ime-bar { position: absolute; right: 0; bottom: 287px; }
      </style>
      <title-bar><ribbon-tabs></ribbon-tabs></title-bar>
      <word-ribbon></word-ribbon>
      <main class="canvas">
        <div class="sheet">
          <word-ruler></word-ruler>
          <doc-page>
            ${lines.map(([n, t, p]) => `<toc-row num="${n}" page="${p}">${t}</toc-row>`).join('')}
          </doc-page>
        </div>
      </main>
      <status-bar></status-bar>
      <task-bar></task-bar>
      <ime-bar></ime-bar>
    `;
  }
}

customElements.define('ui-icon', UiIcon);
customElements.define('title-bar', TitleBar);
customElements.define('ribbon-tabs', RibbonTabs);
customElements.define('ribbon-group', RibbonGroup);
customElements.define('ribbon-big', RibbonBig);
customElements.define('ribbon-item', RibbonItem);
customElements.define('citation-style', CitationStyle);
customElements.define('word-ribbon', WordRibbon);
customElements.define('word-ruler', WordRuler);
customElements.define('toc-row', TocRow);
customElements.define('doc-page', DocPage);
customElements.define('ime-bar', ImeBar);
customElements.define('status-bar', StatusBar);
customElements.define('task-app', TaskApp);
customElements.define('task-bar', TaskBar);
customElements.define('word-app', WordApp);
</script>
</body>
</html>
